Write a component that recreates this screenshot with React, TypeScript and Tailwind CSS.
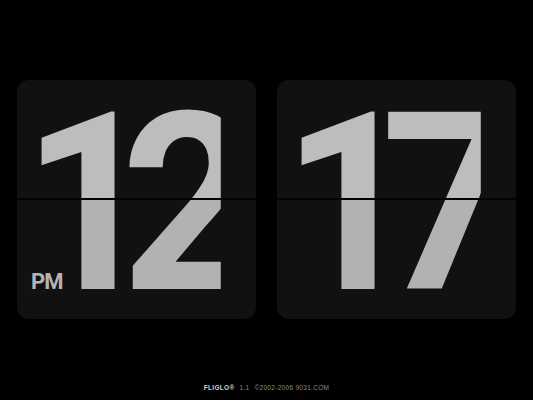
import React from "react";

function Card({ text, pm }: { text: string; pm?: boolean }) {
  return (
    <div className="relative h-[239px] w-[239px] overflow-hidden rounded-[12px] bg-[#111111]">
      <div className="flex h-full w-full items-center justify-center">
        <span className="block translate-x-[-15px] translate-y-[5px] scale-x-[0.95] bg-[linear-gradient(to_bottom,#bdbdbd_48%,#b2b2b2_48%)] bg-clip-text font-['Roboto',sans-serif] text-[248px] font-bold leading-none tracking-[-38px] text-transparent">
          {text}
        </span>
      </div>
      <div className="absolute left-0 top-[118px] h-[2px] w-full bg-[#030303]" />
      {pm && (
        <span className="absolute left-[14px] top-[191px] font-['Roboto',sans-serif] text-[22px] font-bold leading-none tracking-[-1px] text-[#b4b4b4]">
          PM
        </span>
      )}
    </div>
  );
}

export default function App() {
  return (
    <div className="flex h-[400px] w-[533px] flex-col items-center bg-black">
      <div className="mt-[80px] flex gap-[21px]">
        <Card text="12" pm />
        <Card text="17" />
      </div>
      <div className="mt-[66px] flex items-center gap-[5px] font-['Liberation_Sans',sans-serif] text-[6.5px] leading-none tracking-[0.3px] text-[#8a8a8a]">
        <span className="font-bold text-[#d0d0d0]">FLIGLO®</span>
        <span>1.1</span>
        <span>©2002-2006 9031.COM</span>
      </div>
    </div>
  );
}
